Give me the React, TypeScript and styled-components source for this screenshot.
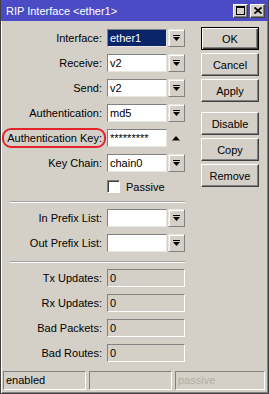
import React from "react";
import styled, { createGlobalStyle, css } from "styled-components";

const Global = createGlobalStyle`
  html, body { margin: 0; padding: 0; background: #d4d0c8; }
  body { font-family: "Liberation Sans", Arial, sans-serif; font-size: 11px; color: #000; }
  * { box-sizing: border-box; }
`;

const Window = styled.div`
  width: 269px;
  height: 394px;
  background: #d4d0c8;
  border: 1px solid #404040;
  border-top: none;
  box-shadow: inset 1px 0 0 #ffffff, inset -1px -1px 0 #808080;
  display: flex;
  flex-direction: column;
`;

const TitleBar = styled.div`
  height: 21px;
  background: #4b4bc6;
  display: flex;
  align-items: center;
  padding: 0 3px 0 5px;
  color: #fff;
  font-size: 11px;
`;

const TitleText = styled.div`
  flex: 1;
  white-space: nowrap;
`;

const TitleBtn = styled.div`
  width: 15px;
  height: 14px;
  margin-left: 2px;
  background: #d4d0c8;
  border: 1px solid;
  border-color: #ffffff #404040 #404040 #ffffff;
  box-shadow: inset -1px -1px 0 #808080;
  display: flex;
  align-items: center;
  justify-content: center;
`;

const Body = styled.div`
  display: flex;
  padding-top: 8px;
`;

const Form = styled.div`
  width: 184px;
  display: flex;
  flex-direction: column;
`;

const Row = styled.div<{ $h?: number; $mb?: number }>`
  display: flex;
  align-items: center;
  height: ${(p) => p.$h ?? 18}px;
  margin-bottom: ${(p) => p.$mb ?? 7}px;
`;

const Label = styled.div<{ $highlight?: boolean }>`
  width: 101px;
  margin-right: 5px;
  text-align: right;
  white-space: nowrap;
  position: relative;
  ${(p) =>
    p.$highlight &&
    css`
      &::after {
        content: "";
        position: absolute;
        left: 1px;
        right: -4px;
        top: -4px;
        bottom: -4px;
        border: 2px solid #e3242b;
        border-radius: 9px;
      }
    `}
`;

const Field = styled.div<{ $selected?: boolean; $readOnly?: boolean; $wide?: boolean }>`
  width: ${(p) => (p.$wide ? 78 : 60)}px;
  height: 18px;
  border: 1px solid;
  border-color: #808080 #e8e6e0 #e8e6e0 #808080;
  background: ${(p) => (p.$selected ? "#0a246a" : p.$readOnly ? "#d4d0c8" : "#ffffff")};
  color: ${(p) => (p.$selected ? "#ffffff" : "#000")};
  padding-left: 2px;
  line-height: 16px;
  white-space: nowrap;
  overflow: hidden;
  ${(p) => p.$readOnly && css`border-color: #808080 #ffffff #ffffff #808080;`}
`;

const DropBtn = styled.div`
  width: 17px;
  height: 18px;
  margin-left: 1px;
  border: 1px solid;
  border-color: #e8e6e0 #808080 #808080 #e8e6e0;
  box-shadow: inset 1px 1px 0 #ffffff;
  background: #d4d0c8;
  display: flex;
  align-items: center;
  justify-content: center;
`;

const UpArrow = styled.svg`
  margin-left: 5px;
`;

const CheckBox = styled.div`
  width: 13px;
  height: 13px;
  background: #fff;
  border: 1px solid;
  border-color: #808080 #ffffff #ffffff #808080;
  box-shadow: inset 1px 1px 0 #404040;
  margin-right: 6px;
`;

const Separator = styled.div<{ $mt?: number }>`
  margin: ${(p) => p.$mt ?? 0}px 0 6px 9px;
  height: 2px;
  border-top: 1px solid #a0a0a0;
  border-bottom: 1px solid #ffffff;
`;

const Spacer = styled.div`
  width: 106px;
`;

const Buttons = styled.div`
  margin-left: 16px;
  margin-top: -2px;
  display: flex;
  flex-direction: column;
  gap: 3px;
`;

const Button = styled.div<{ $default?: boolean; $mt?: number }>`
  width: 58px;
  height: 23px;
  margin-top: ${(p) => p.$mt ?? 0}px;
  display: flex;
  align-items: center;
  justify-content: center;
  background: #d4d0c8;
  border: 1px solid;
  border-color: #ffffff #404040 #404040 #ffffff;
  box-shadow: inset -1px -1px 0 #808080;
  ${(p) =>
    p.$default &&
    css`
      border: 1px solid #000;
      box-shadow: inset 1px 1px 0 #ffffff, inset -1px -1px 0 #404040, inset -2px -2px 0 #808080;
    `}
`;

const StatusBar = styled.div`
  margin-top: auto;
  margin-bottom: 3px;
  display: flex;
  gap: 3px;
  padding-left: 2px;
`;

const StatusPanel = styled.div<{ $w: number; $dim?: boolean }>`
  width: ${(p) => p.$w}px;
  height: 19px;
  border: 1px solid;
  border-color: #808080 #ffffff #ffffff #808080;
  padding-left: 2px;
  line-height: 17px;
  color: ${(p) => (p.$dim ? "#b0aca4" : "#000")};
`;

const DropIcon = () => (
  <svg width="7" height="7" viewBox="0 0 7 7">
    <rect x="0" y="0" width="7" height="1" fill="#000" />
    <polygon points="0,2 7,2 3.5,6" fill="#000" />
  </svg>
);

const SelectRow = ({ label, value, selected }: { label: string; value: string; selected?: boolean }) => (
  <Row>
    <Label>{label}</Label>
    <Field $selected={selected}>{value}</Field>
    <DropBtn>
      <DropIcon />
    </DropBtn>
  </Row>
);

const StatRow = ({ label, value }: { label: string; value: string }) => (
  <Row>
    <Label>{label}</Label>
    <Field $readOnly $wide>
      {value}
    </Field>
  </Row>
);

export default function App() {
  return (
    <>
      <Global />
      <Window>
        <TitleBar>
          <TitleText>RIP Interface &lt;ether1&gt;</TitleText>
          <TitleBtn>
            <svg width="9" height="9" viewBox="0 0 9 9">
              <rect x="0.5" y="0.5" width="8" height="8" fill="none" stroke="#000" />
              <rect x="0" y="0" width="9" height="2" fill="#000" />
            </svg>
          </TitleBtn>
          <TitleBtn>
            <svg width="8" height="7" viewBox="0 0 8 7">
              <path d="M0.5 0.5 L7.5 6.5 M7.5 0.5 L0.5 6.5" stroke="#000" strokeWidth="1.8" />
            </svg>
          </TitleBtn>
        </TitleBar>
        <Body>
          <Form>
            <SelectRow label="Interface:" value="ether1" selected />
            <SelectRow label="Receive:" value="v2" />
            <SelectRow label="Send:" value="v2" />
            <SelectRow label="Authentication:" value="md5" />
            <Row>
              <Label $highlight>Authentication Key:</Label>
              <Field>*********</Field>
              <UpArrow width="8" height="5" viewBox="0 0 8 5">
                <polygon points="0,4.5 8,4.5 4,0" fill="#000" />
              </UpArrow>
            </Row>
            <SelectRow label="Key Chain:" value="chain0" />
            <Row $h={15}>
              <Spacer />
              <CheckBox />
              Passive
            </Row>
            <Separator />
            <SelectRow label="In Prefix List:" value="" />
            <SelectRow label="Out Prefix List:" value="" />
            <Separator $mt={2} />
            <StatRow label="Tx Updates:" value="0" />
            <StatRow label="Rx Updates:" value="0" />
            <StatRow label="Bad Packets:" value="0" />
            <StatRow label="Bad Routes:" value="0" />
          </Form>
          <Buttons>
            <Button $default>OK</Button>
            <Button>Cancel</Button>
            <Button>Apply</Button>
            <Button $mt={7}>Disable</Button>
            <Button>Copy</Button>
            <Button>Remove</Button>
          </Buttons>
        </Body>
        <StatusBar>
          <StatusPanel $w={83}>enabled</StatusPanel>
          <StatusPanel $w={83} />
          <StatusPanel $w={90} $dim>
            passive
          </StatusPanel>
        </StatusBar>
      </Window>
    </>
  );
}
